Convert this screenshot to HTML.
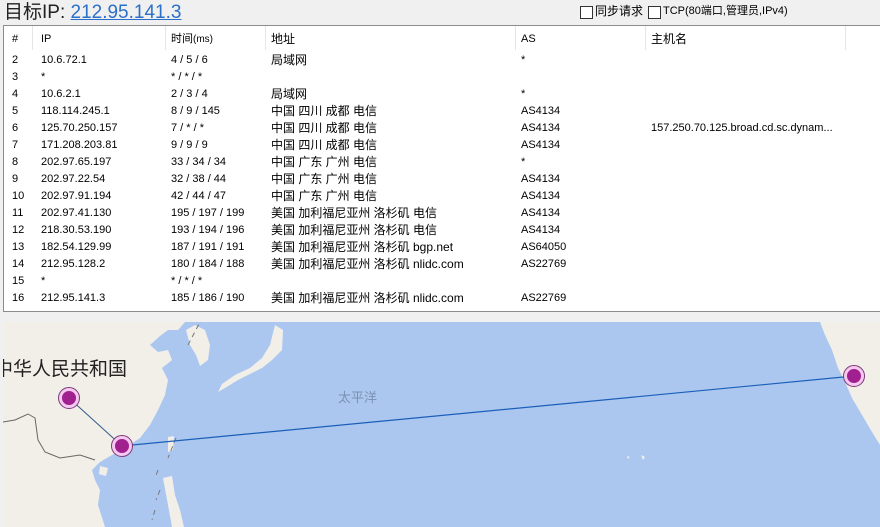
<!DOCTYPE html>
<html><head><meta charset="utf-8"><style>
body{margin:0;width:880px;height:527px;background:#f0f0f0;overflow:hidden;position:relative;font-family:"Liberation Sans","Noto Sans CJK SC",sans-serif;}
.t{position:absolute;white-space:nowrap;font-size:11px;color:#000;line-height:13px}
#title{position:absolute;left:4px;top:1px;font-size:19px;line-height:24px;color:#222}
#title a{color:#2a6fc9;text-decoration:underline}
.cb{position:absolute;top:6px;width:11px;height:11px;border:1px solid #333;background:#fff}
#box{position:absolute;left:3px;top:25px;width:876px;height:285px;border:1px solid #8c8c8c;background:#fff}
.sep{position:absolute;top:26px;width:1px;height:24px;background:#e5e5e5}
</style></head><body>
<div id="title">目标IP: <a>212.95.141.3</a></div>
<div class="cb" style="left:580px"></div><div class="t" style="left:595px;top:5px;font-size:12px">同步请求</div>
<div class="cb" style="left:648px"></div><div class="t" style="left:663px;top:5px;font-size:11px">TCP(80端口,管理员,IPv4)</div>
<div id="box"></div>
<div class="sep" style="left:32px"></div><div class="sep" style="left:165px"></div><div class="sep" style="left:265px"></div><div class="sep" style="left:515px"></div><div class="sep" style="left:645px"></div><div class="sep" style="left:845px"></div>
<div class="t" style="left:12px;top:33px">#</div><div class="t" style="left:41px;top:33px">IP</div><div class="t" style="left:171px;top:33px">时间<span style="font-size:10px">(ms)</span></div><div class="t" style="left:271px;top:33px;font-size:12px">地址</div><div class="t" style="left:521px;top:33px">AS</div><div class="t" style="left:651px;top:33px;font-size:12px">主机名</div>
<div id="rows"></div>
<svg style="position:absolute;left:3px;top:322px" width="877" height="205" viewBox="3 322 877 205">
<rect x="3" y="322" width="877" height="205" fill="#abc7f0"/>
<path d="M3 322 L185 322 L178 330 L168 330 L160 336 L150 345 L158 352 L168 350 L172 360 L162 368 L168 380 L165 395 L158 410 L150 425 L140 438 L128 446 L112 455 L100 462 L92 470 L95 480 L100 490 L98 505 L105 527 L3 527 Z" fill="#f2efe9"/>
<path d="M186 330 L195 325 L205 330 L210 345 L208 360 L200 366 L196 355 L190 345 Z" fill="#f2efe9"/>
<path d="M275 325 L283 330 L282 350 L272 360 L262 368 L248 375 L238 380 L225 388 L218 392 L222 384 L235 375 L250 368 L262 358 L270 345 Z" fill="#f2efe9"/>
<path d="M100 466 L108 468 L106 476 L99 474 Z" fill="#f2efe9"/>
<path d="M168 437 L174 436 L173 450 L168 452 Z" fill="#f2efe9"/>
<path d="M163 478 L172 476 L175 495 L180 510 L184 527 L172 527 L168 505 Z" fill="#f2efe9"/>
<path d="M820 322 L880 322 L880 445 L872 432 L862 415 L852 398 L845 382 L838 368 L832 350 L825 335 Z" fill="#f2efe9"/>
<path d="M641 455 L645 457 L643 460 Z M627 456 L630 457 L628 459 Z" fill="#f2efe9"/>
<path d="M3 422 L15 420 L28 414 L35 418 L38 440 L45 452 L60 458 L80 455 L95 460" fill="none" stroke="#666" stroke-width="1"/>
<path d="M188 345 L200 322 M176 438 L168 458 M158 470 L155 478 M160 490 L156 500 M155 510 L152 520" fill="none" stroke="#777" stroke-width="1" stroke-dasharray="5,4"/>
<line x1="69" y1="398" x2="122" y2="446" stroke="#335c88" stroke-width="1"/>
<line x1="122" y1="446" x2="854" y2="376" stroke="#1b5fb8" stroke-width="1.2"/>
<g fill="#a0208f" stroke="#f7c8ef" stroke-width="3"><circle cx="69" cy="398" r="8.5"/><circle cx="122" cy="446" r="8.5"/><circle cx="854" cy="376" r="8.5"/></g>
<g fill="none" stroke="#7a3a7a" stroke-width="1"><circle cx="69" cy="398" r="10.5"/><circle cx="122" cy="446" r="10.5"/><circle cx="854" cy="376" r="10.5"/></g>
<text x="-6" y="375" font-size="19" font-family="Noto Sans CJK SC,sans-serif" fill="#222">中华人民共和国</text>
<text x="338" y="402" font-size="13" font-family="Noto Sans CJK SC,sans-serif" fill="#7a90b0">太平洋</text>
</svg>
<div style="position:absolute;left:0;top:322px;width:3px;height:205px;background:#f0f0f0"></div>
<script>
var d=[["2","10.6.72.1","4 / 5 / 6","局域网","*",""],["3","*","* / * / *","","",""],["4","10.6.2.1","2 / 3 / 4","局域网","*",""],["5","118.114.245.1","8 / 9 / 145","中国 四川 成都 电信","AS4134",""],["6","125.70.250.157","7 / * / *","中国 四川 成都 电信","AS4134","157.250.70.125.broad.cd.sc.dynam..."],["7","171.208.203.81","9 / 9 / 9","中国 四川 成都 电信","AS4134",""],["8","202.97.65.197","33 / 34 / 34","中国 广东 广州 电信","*",""],["9","202.97.22.54","32 / 38 / 44","中国 广东 广州 电信","AS4134",""],["10","202.97.91.194","42 / 44 / 47","中国 广东 广州 电信","AS4134",""],["11","202.97.41.130","195 / 197 / 199","美国 加利福尼亚州 洛杉矶 电信","AS4134",""],["12","218.30.53.190","193 / 194 / 196","美国 加利福尼亚州 洛杉矶 电信","AS4134",""],["13","182.54.129.99","187 / 191 / 191","美国 加利福尼亚州 洛杉矶 bgp.net","AS64050",""],["14","212.95.128.2","180 / 184 / 188","美国 加利福尼亚州 洛杉矶 nlidc.com","AS22769",""],["15","*","* / * / *","","",""],["16","212.95.141.3","185 / 186 / 190","美国 加利福尼亚州 洛杉矶 nlidc.com","AS22769",""]];
var x=[12,41,171,271,521,651],h="";
d.forEach(function(r,i){var y=54+i*17;r.forEach(function(c,j){if(c)h+='<div class="t" style="left:'+x[j]+'px;top:'+y+'px'+(j==3?';font-size:12px':'')+'">'+c+'</div>';});});
document.getElementById("rows").innerHTML=h;
</script>
</body></html>
